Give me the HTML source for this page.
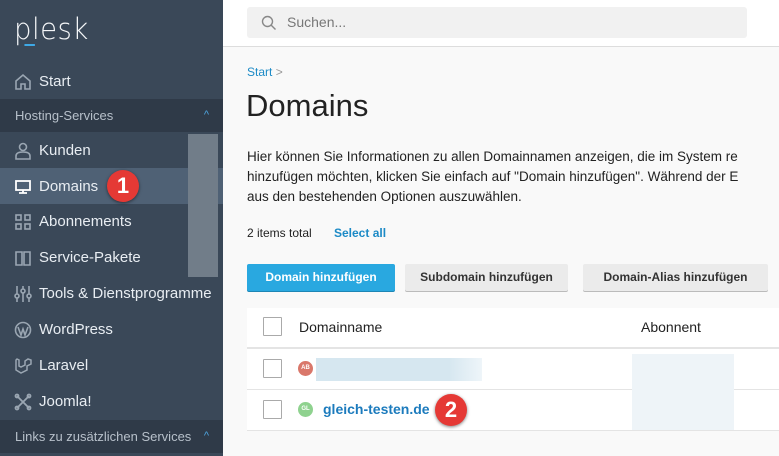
<!DOCTYPE html>
<html><head><meta charset="utf-8"><style>
*{margin:0;padding:0;box-sizing:border-box}
body{width:779px;height:456px;overflow:hidden;background:#f9f9f9;font-family:"Liberation Sans",sans-serif;position:relative}
.sb{position:absolute;left:0;top:0;width:223px;height:456px;background:#3a4858;color:#e8edf2}
.logo{position:absolute;left:14px;top:12px;font-size:29px;color:#f4f6f8;letter-spacing:0.5px;font-family:"DejaVu Sans",sans-serif;font-weight:200;transform:scaleX(0.95);transform-origin:left}
.logo i{position:absolute;left:11px;top:32px;width:11px;height:2px;background:#3ea9e6}
.it{position:absolute;left:0;width:223px;height:36px;font-size:15px;line-height:38px;padding-left:39px}
.it svg{position:absolute;left:14px;top:10px}
.sec{position:absolute;left:0;width:223px;height:33px;background:#2f3a48;color:#b7c0ca;font-size:13px;line-height:33px;padding-left:15px}
.sec b{position:absolute;right:14px;top:0;color:#4ea6e0;font-weight:normal;font-size:11px}
.act{background:#4f6175}
.badge{position:absolute;width:32px;height:32px;border-radius:50%;background:#e53935;color:#fff;font-weight:bold;font-size:22px;text-align:center;line-height:32px;box-shadow:0 1px 3px rgba(0,0,0,.5)}
.hdr{position:absolute;left:223px;top:0;right:0;height:47px;background:#fff;border-bottom:1px solid #ddd}
.search{position:absolute;left:24px;top:7px;width:500px;height:31px;background:#f1f1f1;border-radius:3px;color:#777;font-size:14px;line-height:31px;padding-left:40px}
.btn{position:absolute;top:264px;height:27px;font-size:12px;font-weight:bold;text-align:center;line-height:27px;border-radius:2px;background:#ebebeb;color:#333;box-shadow:0 1px 0 #bbb}
.cb{position:absolute;width:19px;height:19px;border:1px solid #aaa;background:#fff;border-radius:1px}
.av{position:absolute;width:15px;height:15px;border-radius:50%;color:#fff;font-size:6px;font-weight:bold;text-align:center;line-height:15px}
</style></head><body>
<div class="sb">
<div class="logo">plesk<i></i></div>
<div class="it" style="top:63px"><svg width="18" height="18" viewBox="0 0 18 18" fill="none" stroke="#9aa6b2" stroke-width="1.6"><path d="M2 8L9 2l7 6v8h-5v-5H7v5H2z"/></svg>Start</div>
<div class="sec" style="top:99px">Hosting-Services<b>^</b></div>
<div class="it" style="top:132px"><svg width="18" height="18" viewBox="0 0 18 18" fill="none" stroke="#9aa6b2" stroke-width="1.6"><circle cx="9" cy="5" r="3.5"/><path d="M2 17v-3c0-3 3-4 7-4s7 1 7 4v3z"/></svg>Kunden</div>
<div class="it act" style="top:168px"><svg width="18" height="18" viewBox="0 0 18 18" fill="none" stroke="#fff" stroke-width="1.8"><rect x="2" y="3" width="14" height="9"/><path d="M9 12v3M5 15h8"/></svg>Domains</div>
<div class="it" style="top:203px"><svg width="18" height="18" viewBox="0 0 18 18" fill="none" stroke="#9aa6b2" stroke-width="1.6"><rect x="2" y="2" width="5" height="5"/><rect x="11" y="2" width="5" height="5"/><rect x="2" y="11" width="5" height="5"/><rect x="11" y="11" width="5" height="5"/></svg>Abonnements</div>
<div class="it" style="top:239px"><svg width="18" height="18" viewBox="0 0 18 18" fill="none" stroke="#9aa6b2" stroke-width="1.6"><path d="M2 3h6v13H2zM10 3h6v13h-6z"/></svg>Service-Pakete</div>
<div class="it" style="top:275px"><svg width="18" height="18" viewBox="0 0 18 18" fill="none" stroke="#9aa6b2" stroke-width="1.6"><path d="M3 1v16M9 1v16M15 1v16"/><circle cx="3" cy="11" r="2" fill="#3a4858"/><circle cx="9" cy="6" r="2" fill="#3a4858"/><circle cx="15" cy="11" r="2" fill="#3a4858"/></svg>Tools &amp; Dienstprogramme</div>
<div class="it" style="top:311px"><svg width="18" height="18" viewBox="0 0 18 18" fill="none" stroke="#9aa6b2" stroke-width="1.6"><circle cx="9" cy="9" r="7.5"/><path d="M4 6l3 8 2-6 2 6 3-8"/></svg>WordPress</div>
<div class="it" style="top:347px"><svg width="18" height="18" viewBox="0 0 18 18" fill="none" stroke="#9aa6b2" stroke-width="1.5"><path d="M2 3v10l5 3 6-3V9l4-2V3l-3-1-3 2v4L7 10 5 9V3L3 2z"/></svg>Laravel</div>
<div class="it" style="top:383px"><svg width="18" height="18" viewBox="0 0 18 18" fill="none" stroke="#9aa6b2" stroke-width="1.8"><path d="M3 3l12 12M15 3L3 15"/><circle cx="3" cy="3" r="1.5"/><circle cx="15" cy="3" r="1.5"/><circle cx="3" cy="15" r="1.5"/><circle cx="15" cy="15" r="1.5"/></svg>Joomla!</div>
<div class="sec" style="top:420px">Links zu zusätzlichen Services<b>^</b></div>
<div style="position:absolute;left:188px;top:134px;width:30px;height:143px;background:#717d89"></div>
</div>
<div class="badge" style="left:107px;top:170px">1</div>
<div class="hdr"><div class="search"><svg style="position:absolute;left:14px;top:8px" width="16" height="16" viewBox="0 0 16 16" fill="none" stroke="#888" stroke-width="1.4"><circle cx="6.5" cy="6.5" r="5"/><path d="M10 10l4.5 4.5"/></svg>Suchen...</div></div>
<div style="position:absolute;left:247px;top:65px;font-size:12px;color:#1c8ac6">Start <span style="color:#999">&gt;</span></div>
<div style="position:absolute;left:246px;top:88px;font-size:31px;color:#222">Domains</div>
<div style="position:absolute;left:247px;top:147px;width:560px;font-size:13.5px;line-height:20px;color:#222;white-space:nowrap">Hier können Sie Informationen zu allen Domainnamen anzeigen, die im System re<br>hinzufügen möchten, klicken Sie einfach auf "Domain hinzufügen". Während der E<br>aus den bestehenden Optionen auszuwählen.</div>
<div style="position:absolute;left:247px;top:226px;font-size:12px;color:#222">2 items total</div>
<div style="position:absolute;left:334px;top:226px;font-size:12px;color:#1c8ac6;font-weight:bold">Select all</div>
<div class="btn" style="left:247px;width:148px;background:#29a8e0;color:#fff;box-shadow:0 1px 0 #1d86b5">Domain hinzufügen</div>
<div class="btn" style="left:405px;width:163px">Subdomain hinzufügen</div>
<div class="btn" style="left:583px;width:185px">Domain-Alias hinzufügen</div>
<div style="position:absolute;left:247px;top:308px;width:532px;height:122px;background:#fff"></div>
<div style="position:absolute;left:247px;top:347px;width:532px;height:2px;background:#e4e4e4"></div>
<div style="position:absolute;left:247px;top:389px;width:532px;height:1px;background:#e4e4e4"></div>
<div style="position:absolute;left:247px;top:430px;width:532px;height:1px;background:#e4e4e4"></div>
<div class="cb" style="left:263px;top:317px"></div>
<div class="cb" style="left:263px;top:359px"></div>
<div class="cb" style="left:263px;top:400px"></div>
<div style="position:absolute;left:299px;top:319px;font-size:14px;color:#222">Domainname</div>
<div style="position:absolute;left:641px;top:319px;font-size:14px;color:#222">Abonnent</div>
<div class="av" style="left:298px;top:361px;background:#d9776a">AB</div>
<div style="position:absolute;left:316px;top:358px;width:166px;height:23px;background:linear-gradient(90deg,#d6e7f0 80%,#eef5f9)"></div>
<div style="position:absolute;left:632px;top:354px;width:102px;height:76px;background:#eef4f8"></div>
<div class="av" style="left:298px;top:402px;background:#8fd28f">GL</div>
<div style="position:absolute;left:323px;top:401px;font-size:14px;color:#1c7bbd;font-weight:bold">gleich-testen.de</div>
<div class="badge" style="left:435px;top:394px">2</div>
</body></html>
